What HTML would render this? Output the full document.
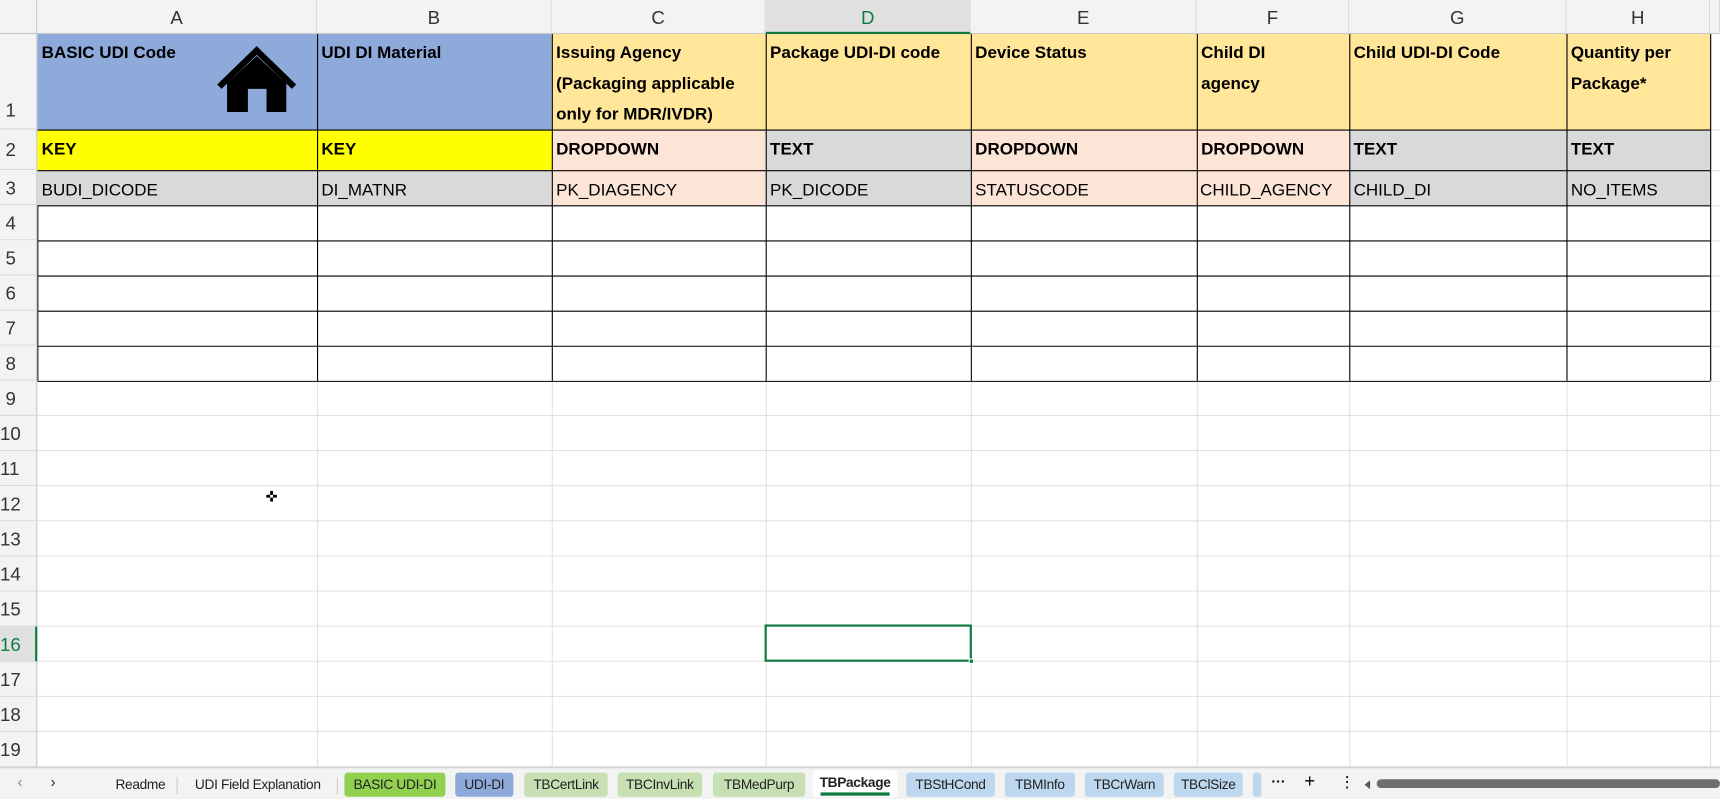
<!DOCTYPE html>
<html><head><meta charset="utf-8"><style>
*{margin:0;padding:0;box-sizing:border-box}
html,body{width:1720px;height:799px;overflow:hidden;background:#fff}
#w{position:absolute;left:0;top:0;width:1568px;height:728px;transform:scale(1.09694,1.0975);transform-origin:0 0;font-family:"Liberation Sans",Arial,sans-serif}
.a{position:absolute}
.ch{position:absolute;top:0;height:31px;background:#f3f3f3;border-right:1px solid #dadada;border-bottom:1px solid #c8c8c8;text-align:center;line-height:34px;font-size:17px;color:#333}
.rh{position:absolute;left:0;width:34px;background:#f3f3f3;border-bottom:1px solid #dadada;border-right:1px solid #c8c8c8;font-size:17px;color:#333;padding-left:5px}
.c{position:absolute;font-size:15.5px;color:#000;padding:3px 4px;line-height:25px;overflow:hidden;white-space:nowrap}
.b{font-weight:bold}
.tab{position:absolute;top:704px;height:22px;font-size:12.5px;line-height:22px;text-align:center;color:#222;border-radius:3px;letter-spacing:-0.3px}
</style></head><body><div id="w">
<svg class="a" style="left:0;top:0" width="1568" height="700">
<g stroke="#e1e1e1" stroke-width="1">
<line x1="34" y1="378.5" x2="1568" y2="378.5"/><line x1="34" y1="410.5" x2="1568" y2="410.5"/><line x1="34" y1="442.5" x2="1568" y2="442.5"/><line x1="34" y1="474.5" x2="1568" y2="474.5"/><line x1="34" y1="506.5" x2="1568" y2="506.5"/><line x1="34" y1="538.5" x2="1568" y2="538.5"/><line x1="34" y1="570.5" x2="1568" y2="570.5"/><line x1="34" y1="602.5" x2="1568" y2="602.5"/><line x1="34" y1="634.5" x2="1568" y2="634.5"/><line x1="34" y1="666.5" x2="1568" y2="666.5"/><line x1="34" y1="698.5" x2="1568" y2="698.5"/>
<line x1="289.5" y1="347" x2="289.5" y2="700"/><line x1="503.5" y1="347" x2="503.5" y2="700"/><line x1="698.5" y1="347" x2="698.5" y2="700"/><line x1="885.5" y1="347" x2="885.5" y2="700"/><line x1="1091.5" y1="347" x2="1091.5" y2="700"/><line x1="1230.5" y1="347" x2="1230.5" y2="700"/><line x1="1428.5" y1="347" x2="1428.5" y2="700"/><line x1="1559.5" y1="31" x2="1559.5" y2="700"/>
<line x1="1559" y1="118.5" x2="1568" y2="118.5"/><line x1="1559" y1="155.5" x2="1568" y2="155.5"/><line x1="1559" y1="187.5" x2="1568" y2="187.5"/><line x1="1559" y1="219.5" x2="1568" y2="219.5"/><line x1="1559" y1="251.5" x2="1568" y2="251.5"/><line x1="1559" y1="283.5" x2="1568" y2="283.5"/><line x1="1559" y1="315.5" x2="1568" y2="315.5"/><line x1="1559" y1="347.5" x2="1568" y2="347.5"/>
</g></svg>
<div class="a" style="left:34px;top:31px;width:469px;height:87px;background:#8eaadb"></div>
<div class="a" style="left:503px;top:31px;width:1056px;height:87px;background:#ffe699"></div>
<div class="a" style="left:34px;top:118px;width:469px;height:37px;background:#ffff00"></div>
<div class="a" style="left:503px;top:118px;width:195px;height:37px;background:#fce4d6"></div>
<div class="a" style="left:698px;top:118px;width:187px;height:37px;background:#d9d9d9"></div>
<div class="a" style="left:885px;top:118px;width:345px;height:37px;background:#fce4d6"></div>
<div class="a" style="left:1230px;top:118px;width:329px;height:37px;background:#d9d9d9"></div>
<div class="a" style="left:34px;top:155px;width:469px;height:32px;background:#d9d9d9"></div>
<div class="a" style="left:503px;top:155px;width:195px;height:32px;background:#fce4d6"></div>
<div class="a" style="left:698px;top:155px;width:187px;height:32px;background:#d9d9d9"></div>
<div class="a" style="left:885px;top:155px;width:345px;height:32px;background:#fce4d6"></div>
<div class="a" style="left:1230px;top:155px;width:329px;height:32px;background:#d9d9d9"></div>
<svg class="a" style="left:0;top:0" width="1568" height="360">
<g stroke="#000" stroke-width="1">
<line x1="34" y1="118.5" x2="1559" y2="118.5"/><line x1="34" y1="155.5" x2="1559" y2="155.5"/><line x1="34" y1="187.5" x2="1559" y2="187.5"/><line x1="34" y1="219.5" x2="1559" y2="219.5"/><line x1="34" y1="251.5" x2="1559" y2="251.5"/><line x1="34" y1="283.5" x2="1559" y2="283.5"/><line x1="34" y1="315.5" x2="1559" y2="315.5"/><line x1="34" y1="347.5" x2="1559" y2="347.5"/>
<line x1="34.5" y1="187" x2="34.5" y2="347"/>
<line x1="289.5" y1="31" x2="289.5" y2="347"/><line x1="503.5" y1="31" x2="503.5" y2="347"/><line x1="698.5" y1="31" x2="698.5" y2="347"/><line x1="885.5" y1="31" x2="885.5" y2="347"/><line x1="1091.5" y1="31" x2="1091.5" y2="347"/><line x1="1230.5" y1="31" x2="1230.5" y2="347"/><line x1="1428.5" y1="31" x2="1428.5" y2="347"/><line x1="1559.5" y1="31" x2="1559.5" y2="347"/>
</g>
<g fill="#000"><path d="M198 77 L234 42 L270 77 L266 81 L234 50 L202 81Z"/><path d="M207 76 L234 51 L261 76 L261 102 L243 102 L243 81 L226 81 L226 102 L207 102Z"/></g>
</svg>
<div class="a" style="left:0;top:0;width:34px;height:31px;background:#f3f3f3;border-right:1px solid #c8c8c8;border-bottom:1px solid #c8c8c8"></div>
<div class="ch" style="left:34px;width:255px">A</div>
<div class="ch" style="left:289px;width:214px">B</div>
<div class="ch" style="left:503px;width:195px">C</div>
<div class="ch" style="left:698px;width:187px;background:#e0e0e0;color:#107c41;border-bottom:2px solid #107c41">D</div>
<div class="ch" style="left:885px;width:206px">E</div>
<div class="ch" style="left:1091px;width:139px">F</div>
<div class="ch" style="left:1230px;width:198px">G</div>
<div class="ch" style="left:1428px;width:131px">H</div>
<div class="ch" style="left:1559px;width:9px"></div>
<div class="rh" style="top:31px;height:87px;padding-top:60px">1</div>
<div class="rh" style="top:118px;height:37px;line-height:37px">2</div>
<div class="rh" style="top:155px;height:32px;line-height:33px">3</div>
<div class="rh" style="top:187px;height:32px;line-height:33px">4</div>
<div class="rh" style="top:219px;height:32px;line-height:33px">5</div>
<div class="rh" style="top:251px;height:32px;line-height:33px">6</div>
<div class="rh" style="top:283px;height:32px;line-height:33px">7</div>
<div class="rh" style="top:315px;height:32px;line-height:33px">8</div>
<div class="rh" style="top:347px;height:32px;line-height:33px">9</div>
<div class="rh" style="top:379px;height:32px;line-height:33px;padding-left:0">10</div>
<div class="rh" style="top:411px;height:32px;line-height:33px;padding-left:0">11</div>
<div class="rh" style="top:443px;height:32px;line-height:33px;padding-left:0">12</div>
<div class="rh" style="top:475px;height:32px;line-height:33px;padding-left:0">13</div>
<div class="rh" style="top:507px;height:32px;line-height:33px;padding-left:0">14</div>
<div class="rh" style="top:539px;height:32px;line-height:33px;padding-left:0">15</div>
<div class="rh" style="top:571px;height:32px;line-height:33px;padding-left:0;background:#e0e0e0;color:#107c41;border-right:2px solid #107c41">16</div>
<div class="rh" style="top:603px;height:32px;line-height:33px;padding-left:0">17</div>
<div class="rh" style="top:635px;height:32px;line-height:33px;padding-left:0">18</div>
<div class="rh" style="top:667px;height:32px;line-height:33px;padding-left:0">19</div>
<div class="c b" style="left:34px;top:33px">BASIC UDI Code</div>
<div class="c b" style="left:289px;top:33px">UDI DI Material</div>
<div class="c b" style="left:503px;top:32px;white-space:normal;width:195px;line-height:28px">Issuing Agency (Packaging applicable only for MDR/IVDR)</div>
<div class="c b" style="left:698px;top:33px">Package UDI-DI code</div>
<div class="c b" style="left:885px;top:33px">Device Status</div>
<div class="c b" style="left:1091px;top:32px;line-height:28px">Child DI<br>agency</div>
<div class="c b" style="left:1230px;top:33px">Child UDI-DI Code</div>
<div class="c b" style="left:1428px;top:32px;line-height:28px">Quantity per<br>Package*</div>
<div class="c b" style="left:34px;top:121px">KEY</div>
<div class="c b" style="left:289px;top:121px">KEY</div>
<div class="c b" style="left:503px;top:121px">DROPDOWN</div>
<div class="c b" style="left:698px;top:121px">TEXT</div>
<div class="c b" style="left:885px;top:121px">DROPDOWN</div>
<div class="c b" style="left:1091px;top:121px">DROPDOWN</div>
<div class="c b" style="left:1230px;top:121px">TEXT</div>
<div class="c b" style="left:1428px;top:121px">TEXT</div>
<div class="c" style="left:34px;top:158px">BUDI_DICODE</div>
<div class="c" style="left:289px;top:158px">DI_MATNR</div>
<div class="c" style="left:503px;top:158px">PK_DIAGENCY</div>
<div class="c" style="left:698px;top:158px">PK_DICODE</div>
<div class="c" style="left:885px;top:158px">STATUSCODE</div>
<div class="c" style="left:1091px;top:158px;width:139px;padding-left:3px">CHILD_AGENCY</div>
<div class="c" style="left:1230px;top:158px">CHILD_DI</div>
<div class="c" style="left:1428px;top:158px">NO_ITEMS</div>
<div class="a" style="left:697px;top:569px;width:189px;height:34px;border:2px solid #107c41"></div>
<div class="a" style="left:883px;top:600px;width:5px;height:5px;background:#107c41;border:1px solid #fff"></div>
<div class="a" style="left:242px;top:445px;font-size:13px">✜</div>
<div class="a" style="left:0;top:699px;width:1568px;height:29px;background:#f3f3f3;border-top:1px solid #d0d0d0"></div>
<div class="a" style="left:16px;top:704px;font-size:14px;color:#888">‹</div>
<div class="a" style="left:46px;top:704px;font-size:14px;color:#333">›</div>
<div class="tab" style="left:100px;width:56px">Readme</div>
<div class="a" style="left:161px;top:708px;width:1px;height:16px;background:#ccc"></div>
<div class="tab" style="left:168px;width:134px">UDI Field Explanation</div>
<div class="a" style="left:307px;top:708px;width:1px;height:16px;background:#ccc"></div>
<div class="tab" style="left:314px;width:92px;background:#92d050">BASIC UDI-DI</div>
<div class="tab" style="left:415px;width:53px;background:#8eaadb">UDI-DI</div>
<div class="tab" style="left:478px;width:76px;background:#c6e0b4">TBCertLink</div>
<div class="tab" style="left:563px;width:77px;background:#c6e0b4">TBCInvLink</div>
<div class="tab" style="left:650px;width:84px;background:#c6e0b4">TBMedPurp</div>
<div class="tab" style="left:741px;width:77px;background:#fff;font-weight:bold;height:24px;top:702px">TBPackage</div>
<div class="a" style="left:748px;top:722px;width:63px;height:3px;background:#107c41"></div>
<div class="tab" style="left:826px;width:81px;background:#bdd7ee">TBStHCond</div>
<div class="tab" style="left:916px;width:64px;background:#bdd7ee">TBMInfo</div>
<div class="tab" style="left:989px;width:72px;background:#bdd7ee">TBCrWarn</div>
<div class="tab" style="left:1070px;width:63px;background:#bdd7ee">TBClSize</div>
<div class="tab" style="left:1142px;width:8px;background:#bdd7ee"></div>
<div class="a" style="left:1159px;top:704px;font-size:13px;font-weight:bold">···</div>
<div class="a" style="left:1189px;top:702px;font-size:17px">+</div>
<div class="a" style="left:1221px;top:704px;font-size:14px">⋮</div>
<div class="a" style="left:1244px;top:711px;width:0;height:0;border:4px solid transparent;border-right:5px solid #555;border-left:0"></div>
<div class="a" style="left:1255px;top:710px;width:313px;height:8px;background:#6e6e6e;border-radius:4px"></div>
</div></body></html>
